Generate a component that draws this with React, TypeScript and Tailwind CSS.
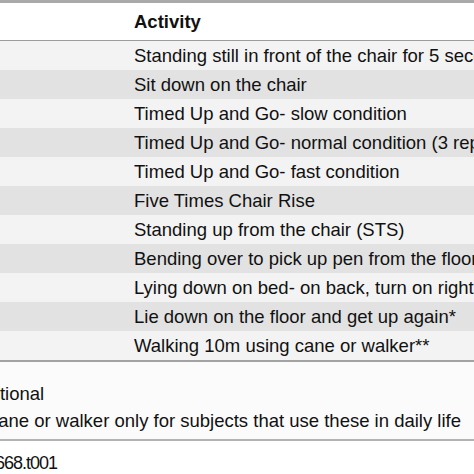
const activities = [
  'Standing still in front of the chair for 5 seconds',
  'Sit down on the chair',
  'Timed Up and Go- slow condition',
  'Timed Up and Go- normal condition (3 repetitions)',
  'Timed Up and Go- fast condition',
  'Five Times Chair Rise',
  'Standing up from the chair (STS)',
  'Bending over to pick up pen from the floor',
  'Lying down on bed- on back, turn on right side',
  'Lie down on the floor and get up again*',
  'Walking 10m using cane or walker**',
];

export default function App() {
  return (
    <div className="w-[474px] h-[474px] overflow-hidden bg-white text-[#111111] text-[18.5px] font-['Liberation_Sans',Arial,sans-serif]">
      <div className="h-[3px] bg-[#a9a9a9]" />
      <div className="h-[37px] flex items-center pl-[134px] font-bold whitespace-nowrap">Activity</div>
      <div className="h-[1px] bg-[#9c9c9c]" />
      {activities.map((a, i) => (
        <div
          key={a}
          className={`h-[29px] flex items-center pl-[134px] whitespace-nowrap ${i % 2 === 0 ? 'bg-[#f3f3f3]' : 'bg-[#e2e2e2]'}`}
        >
          {a}
        </div>
      ))}
      <div className="h-[2px] bg-[#a3a3a3]" />
      <div className="bg-[#fbfbfb] pt-[18px] pb-[5px] leading-[27px] whitespace-nowrap">
        <div className="ml-[-32px]">*Optional</div>
        <div className="ml-[-84px]">**Use of cane or walker only for subjects that use these in daily life</div>
      </div>
      <div className="h-[2px] bg-[#b3b3b3]" />
      <div className="pt-[11px] leading-[22px] text-[18px] tracking-[-1px] whitespace-nowrap ml-[-5px]">668.t001</div>
    </div>
  );
}
